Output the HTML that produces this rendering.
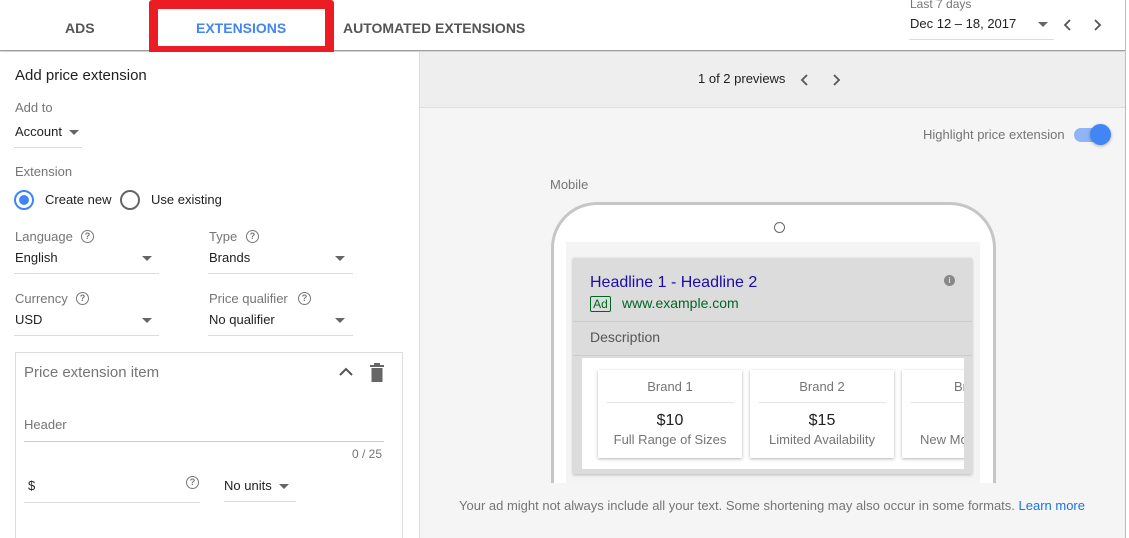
<!DOCTYPE html>
<html><head><style>
*{margin:0;padding:0;box-sizing:border-box}
html{width:1129px;height:538px;overflow:hidden}
body{width:1129px;height:538px;overflow:hidden;font-family:"Liberation Sans",Arial,sans-serif;background:#f5f5f5;position:relative;color:#212121}
.a{position:absolute}
.lbl{color:#757575;font-size:13px}
.val{font-size:13px;color:#212121}
.line{height:1px;background:#dcdcdc}
.tri{width:0;height:0;border-left:5px solid transparent;border-right:5px solid transparent;border-top:5px solid #666}
.q{width:13px;height:13px;border:1.3px solid #777;border-radius:50%;font-size:9px;color:#777;text-align:center;line-height:11px;font-weight:bold}
.card{background:#fff;box-shadow:0 1px 3px rgba(0,0,0,.3);text-align:center}
</style></head><body>
<div class="a" style="left:0;top:0;width:1125px;height:51px;background:#fff;border-bottom:1px solid #9e9e9e;box-shadow:0 1px 2px rgba(0,0,0,.2)"></div>
<div class="a" style="left:65px;top:20px;font-size:14px;font-weight:bold;color:#555">ADS</div>
<div class="a" style="left:149px;top:0;width:185px;height:55px;border:9px solid #ec1c24;border-radius:3px"></div>
<div class="a" style="left:196px;top:20px;font-size:14px;font-weight:bold;color:#4285f4">EXTENSIONS</div>
<div class="a" style="left:343px;top:20px;font-size:14px;font-weight:bold;color:#555">AUTOMATED EXTENSIONS</div>
<div class="a lbl" style="left:910px;top:-3px;font-size:12px">Last 7 days</div>
<div class="a val" style="left:910px;top:16px">Dec 12 – 18, 2017</div>
<div class="tri a" style="left:1038px;top:22px"></div>
<div class="a line" style="left:909px;top:39px;width:145px"></div>
<svg class="a" style="left:1058px;top:16px" width="60" height="18"><path d="M12 4l-5 5 5 5M37 4l5 5-5 5" stroke="#555" stroke-width="1.8" fill="none"/></svg>
<div class="a" style="left:1125px;top:0;width:4px;height:538px;background:#fff;border-left:1px solid #bbb"></div>
<div class="a" style="left:0;top:52px;width:420px;height:486px;background:#fff;border-right:1px solid #ddd"></div>
<div class="a" style="left:15px;top:67px;font-size:15px;color:#212121">Add price extension</div>
<div class="a lbl" style="left:15px;top:100px">Add to</div>
<div class="a val" style="left:15px;top:124px">Account</div>
<div class="tri a" style="left:69px;top:130px"></div>
<div class="a line" style="left:14px;top:147px;width:68px"></div>
<div class="a lbl" style="left:15px;top:164px">Extension</div>
<div class="a" style="left:14px;top:190px;width:20px;height:20px;border:2px solid #4285f4;border-radius:50%"><div style="margin:3px;width:10px;height:10px;background:#4285f4;border-radius:50%"></div></div>
<div class="a val" style="left:45px;top:192px">Create new</div>
<div class="a" style="left:120px;top:190px;width:20px;height:20px;border:2px solid #666;border-radius:50%"></div>
<div class="a val" style="left:151px;top:192px">Use existing</div>
<div class="a lbl" style="left:15px;top:229px">Language</div><div class="a q" style="left:81px;top:230px">?</div>
<div class="a val" style="left:15px;top:250px">English</div><div class="tri a" style="left:142px;top:256px"></div>
<div class="a line" style="left:14px;top:273px;width:145px"></div>
<div class="a lbl" style="left:209px;top:229px">Type</div><div class="a q" style="left:246px;top:230px">?</div>
<div class="a val" style="left:209px;top:250px">Brands</div><div class="tri a" style="left:335px;top:256px"></div>
<div class="a line" style="left:208px;top:273px;width:145px"></div>
<div class="a lbl" style="left:15px;top:291px">Currency</div><div class="a q" style="left:76px;top:292px">?</div>
<div class="a val" style="left:15px;top:312px">USD</div><div class="tri a" style="left:142px;top:318px"></div>
<div class="a line" style="left:14px;top:335px;width:145px"></div>
<div class="a lbl" style="left:209px;top:291px">Price qualifier</div><div class="a q" style="left:298px;top:292px">?</div>
<div class="a val" style="left:209px;top:312px">No qualifier</div><div class="tri a" style="left:335px;top:318px"></div>
<div class="a line" style="left:208px;top:335px;width:145px"></div>
<div class="a" style="left:15px;top:352px;width:388px;height:200px;border:1px solid #ddd"></div>
<div class="a" style="left:24px;top:364px;font-size:15px;color:#757575">Price extension item</div>
<svg class="a" style="left:338px;top:366px" width="16" height="12"><path d="M2 9l6-6 6 6" stroke="#555" stroke-width="2" fill="none"/></svg>
<svg class="a" style="left:370px;top:363px" width="14" height="20"><rect x="0" y="2" width="14" height="2" fill="#666"/><rect x="4" y="0" width="6" height="2" fill="#666"/><rect x="1.5" y="5" width="11" height="14" fill="#666"/></svg>
<div class="a lbl" style="left:24px;top:417px">Header</div>
<div class="a line" style="left:24px;top:441px;width:360px;background:#ccc"></div>
<div class="a lbl" style="left:352px;top:447px;font-size:12px">0 / 25</div>
<div class="a val" style="left:28px;top:478px">$</div>
<div class="a q" style="left:186px;top:476px">?</div>
<div class="a line" style="left:24px;top:502px;width:176px"></div>
<div class="a val" style="left:224px;top:478px">No units</div><div class="tri a" style="left:279px;top:484px"></div>
<div class="a line" style="left:224px;top:501px;width:72px"></div>
<div class="a" style="left:420px;top:52px;width:705px;height:56px;background:#eee;border-bottom:1px solid #ddd"></div>
<div class="a val" style="left:698px;top:71px">1 of 2 previews</div>
<svg class="a" style="left:797px;top:71px" width="50" height="18"><path d="M10 4l-5 5 5 5M37 4l5 5-5 5" stroke="#555" stroke-width="1.8" fill="none"/></svg>
<div class="a lbl" style="left:923px;top:127px">Highlight price extension</div>
<div class="a" style="left:1074px;top:128px;width:34px;height:14px;background:#8fb4f7;border-radius:7px"></div>
<div class="a" style="left:1090px;top:124px;width:21px;height:21px;background:#4285f4;border-radius:50%;box-shadow:0 1px 3px rgba(0,0,0,.3)"></div>
<div class="a lbl" style="left:550px;top:177px">Mobile</div>
<div class="a" style="left:551px;top:202px;width:445px;height:300px;border:3px solid #c6c6c6;border-bottom:none;border-radius:46px 46px 0 0;background:#fff"></div>
<div class="a" style="left:774px;top:222px;width:11px;height:11px;border:1px solid #666;border-radius:50%"></div>
<div class="a" style="left:566px;top:242px;width:414px;height:260px;background:#f4f4f4"></div>
<div class="a" style="left:573px;top:258px;width:399px;height:216px;background:#dcdcdc;box-shadow:0 1px 3px rgba(0,0,0,.25)"></div>
<div class="a" style="left:590px;top:274px;font-size:16px;color:#1a0dab">Headline 1 - Headline 2</div>
<div class="a" style="left:944px;top:275px;width:11px;height:11px;background:#888;border-radius:50%;color:#ddd;font-size:8px;text-align:center;line-height:11px;font-weight:bold">i</div>
<div class="a" style="left:590px;top:296px;width:21px;height:16px;border:1px solid #006621;border-radius:2px;font-size:12px;color:#006621;text-align:center;line-height:14px">Ad</div>
<div class="a" style="left:622px;top:295px;font-size:14px;color:#006621">www.example.com</div>
<div class="a" style="left:573px;top:321px;width:399px;height:1px;background:#ccc"></div>
<div class="a" style="left:590px;top:329px;font-size:14px;color:#555">Description</div>
<div class="a" style="left:573px;top:355px;width:399px;height:1px;background:#ccc"></div>
<div class="a" style="left:582px;top:358px;width:382px;height:111px;background:#fff;overflow:hidden">
 <div class="a card" style="left:16px;top:12px;width:144px;height:88px"><div style="margin-top:9px;font-size:13px;color:#757575">Brand 1</div><div style="margin:8px 8px 0;height:1px;background:#e5e5e5"></div><div style="margin-top:9px;font-size:16px;color:#212121">$10</div><div style="font-size:13px;color:#757575;margin-top:2px">Full Range of Sizes</div></div>
 <div class="a card" style="left:168px;top:12px;width:144px;height:88px"><div style="margin-top:9px;font-size:13px;color:#757575">Brand 2</div><div style="margin:8px 8px 0;height:1px;background:#e5e5e5"></div><div style="margin-top:9px;font-size:16px;color:#212121">$15</div><div style="font-size:13px;color:#757575;margin-top:2px">Limited Availability</div></div>
 <div class="a card" style="left:320px;top:12px;width:144px;height:88px"><div style="margin-top:9px;font-size:13px;color:#757575;padding-left:52px;text-align:left">Brand 3</div><div style="margin:8px 8px 0;height:1px;background:#e5e5e5"></div><div style="margin-top:9px;font-size:16px;color:#fff">$</div><div style="font-size:13px;color:#757575;margin-top:2px;text-align:left;padding-left:18px">New Models</div></div>
</div>
<div class="a" style="left:420px;top:483px;width:705px;height:55px;background:#f5f5f5"></div>
<div class="a" style="left:459px;top:498px;font-size:13px;color:#757575">Your ad might not always include all your text. Some shortening may also occur in some formats. <span style="color:#1a73e8">Learn more</span></div>
</body></html>
